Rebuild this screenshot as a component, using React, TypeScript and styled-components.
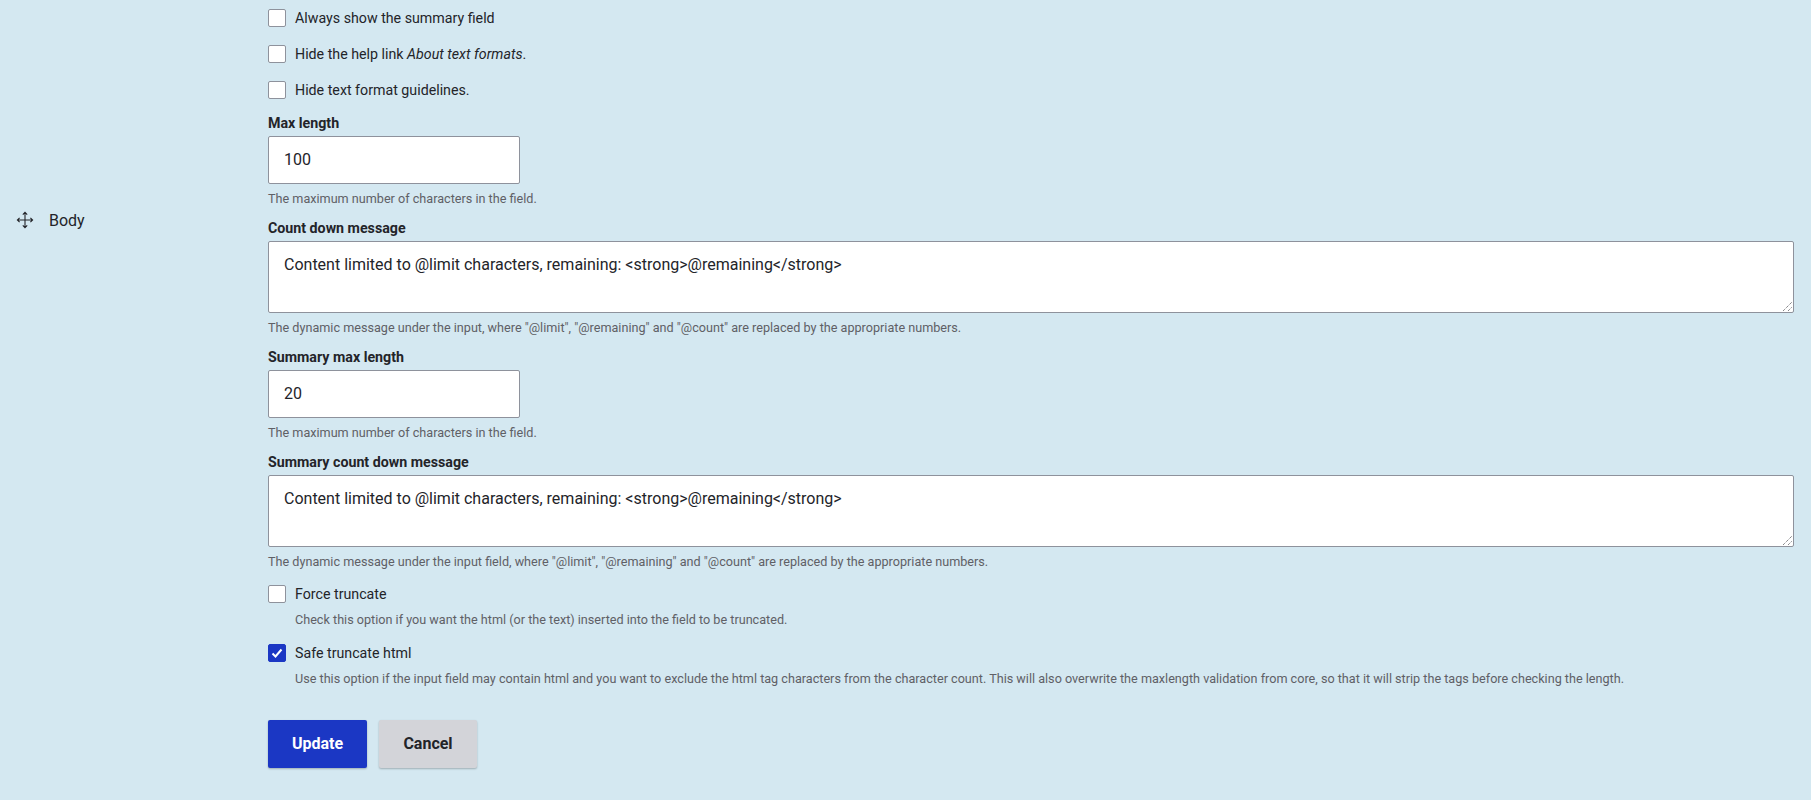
import React from 'react';
import styled, { createGlobalStyle } from 'styled-components';

const GlobalStyle = createGlobalStyle`
  html, body {
    margin: 0;
    height: 800px;
    overflow: hidden;
    background: #d4e8f1;
  }
  body {
    font-family: Roboto, "Liberation Sans", sans-serif;
    color: #232429;
  }
`;

const Row = styled.div`
  display: flex;
  height: 800px;
`;

// drag handle + field name
const HandleCell = styled.div`
  width: 268px;
  flex: none;
  display: flex;
  align-items: flex-start;
  gap: 15px;
  padding: 211px 0 0 16px;
  box-sizing: border-box;
  font-size: 16px;
  line-height: 20px;
`;

const FormCell = styled.div`
  flex: 1;
  padding: 9px 17px 0 0;
  min-width: 0;
`;

// checkbox stack above the first text field
const CheckList = styled.div`
  display: flex;
  flex-direction: column;
  gap: 18px;
  margin-bottom: 15px;
`;

const CheckRow = styled.label`
  display: flex;
  align-items: center;
  gap: 9px;
  height: 18px;
  font-size: 14.22px;
`;

const Box = styled.span<{ $checked?: boolean }>`
  width: 18px;
  height: 18px;
  flex: none;
  box-sizing: border-box;
  border-radius: 2px;
  border: 1px solid ${(p) => (p.$checked ? '#1b37c4' : '#8e929c')};
  background: ${(p) => (p.$checked ? '#1b37c4' : '#fff')};
  display: flex;
  align-items: center;
  justify-content: center;
`;

const Field = styled.div`
  margin-bottom: 12px;
`;

const FieldLabel = styled.div`
  font-size: 14.22px;
  line-height: 18px;
  font-weight: 700;
  margin-bottom: 4px;
`;

const NumberInput = styled.div`
  width: 252px;
  height: 48px;
  box-sizing: border-box;
  background: #fff;
  border: 1px solid #8e929c;
  border-radius: 2px;
  padding: 0 15px 2px;
  display: flex;
  align-items: center;
  font-size: 16px;
`;

const TextArea = styled.div`
  position: relative;
  height: 72px;
  box-sizing: border-box;
  background: #fff;
  border: 1px solid #8e929c;
  border-radius: 2px;
  padding: 12px 15px;
  font-size: 16px;
  line-height: 22px;
`;

// resize grip in the corner of the textarea
const Grip = styled.svg`
  position: absolute;
  right: 1px;
  bottom: 1px;
  width: 9px;
  height: 9px;
`;

const Description = styled.div`
  font-size: 12.64px;
  line-height: 16px;
  color: #5f6066;
  margin-top: 7px;
`;

const CheckOptions = styled.div`
  display: flex;
  flex-direction: column;
  gap: 16px;
  margin-top: 15px;
`;

const OptionHelp = styled(Description)`
  margin-top: 9px;
  padding-left: 27px;
`;

const Buttons = styled.div`
  display: flex;
  gap: 12px;
  margin-top: 33px;
`;

const Button = styled.button<{ $primary?: boolean }>`
  height: 48px;
  width: ${(p) => (p.$primary ? '99px' : '98px')};
  border: 0;
  padding: 0 0 2px;
  border-radius: 2px;
  font-family: inherit;
  font-size: 16px;
  font-weight: 700;
  color: ${(p) => (p.$primary ? '#fff' : '#232429')};
  background: ${(p) => (p.$primary ? '#1b37c4' : '#d3d4d9')};
  box-shadow: 0 1px 2px rgba(0, 0, 0, 0.25);
`;

const MoveIcon = () => (
  <svg width="18" height="18" viewBox="0 0 18 18" fill="none" stroke="#232429" strokeWidth="1.1">
    <path d="M9 1.5v15M1.5 9h15M6.8 3.6 9 1.4l2.2 2.2M6.8 14.4 9 16.6l2.2-2.2M3.6 6.8 1.4 9l2.2 2.2M14.4 6.8 16.6 9l-2.2 2.2" />
  </svg>
);

const Check = () => (
  <svg width="12" height="12" viewBox="0 0 12 12" fill="none" stroke="#fff" strokeWidth="2">
    <path d="M1.5 6.5 4.5 9.5 10.5 2.5" />
  </svg>
);

const ResizeGrip = () => (
  <Grip viewBox="0 0 9 9" stroke="#55565b" strokeWidth="1" strokeDasharray="1 1">
    <path d="M0 9 9 0M5 9l4-4" />
  </Grip>
);

const App = () => (
  <>
    <GlobalStyle />
    <Row>
      <HandleCell>
        <MoveIcon />
        <span>Body</span>
      </HandleCell>
      <FormCell>
        <CheckList>
          <CheckRow><Box />Always show the summary field</CheckRow>
          <CheckRow><Box /><span>Hide the help link <em>About text formats</em>.</span></CheckRow>
          <CheckRow><Box />Hide text format guidelines.</CheckRow>
        </CheckList>

        <Field>
          <FieldLabel>Max length</FieldLabel>
          <NumberInput>100</NumberInput>
          <Description>The maximum number of characters in the field.</Description>
        </Field>

        <Field>
          <FieldLabel>Count down message</FieldLabel>
          <TextArea>
            Content limited to @limit characters, remaining: &lt;strong&gt;@remaining&lt;/strong&gt;
            <ResizeGrip />
          </TextArea>
          <Description>The dynamic message under the input, where "@limit", "@remaining" and "@count" are replaced by the appropriate numbers.</Description>
        </Field>

        <Field>
          <FieldLabel>Summary max length</FieldLabel>
          <NumberInput>20</NumberInput>
          <Description>The maximum number of characters in the field.</Description>
        </Field>

        <Field>
          <FieldLabel>Summary count down message</FieldLabel>
          <TextArea>
            Content limited to @limit characters, remaining: &lt;strong&gt;@remaining&lt;/strong&gt;
            <ResizeGrip />
          </TextArea>
          <Description>The dynamic message under the input field, where "@limit", "@remaining" and "@count" are replaced by the appropriate numbers.</Description>
        </Field>

        <CheckOptions>
          <div>
            <CheckRow><Box />Force truncate</CheckRow>
            <OptionHelp>Check this option if you want the html (or the text) inserted into the field to be truncated.</OptionHelp>
          </div>
          <div>
            <CheckRow><Box $checked><Check /></Box>Safe truncate html</CheckRow>
            <OptionHelp>Use this option if the input field may contain html and you want to exclude the html tag characters from the character count. This will also overwrite the maxlength validation from core, so that it will strip the tags before checking the length.</OptionHelp>
          </div>
        </CheckOptions>

        <Buttons>
          <Button $primary>Update</Button>
          <Button>Cancel</Button>
        </Buttons>
      </FormCell>
    </Row>
  </>
);

export default App;
